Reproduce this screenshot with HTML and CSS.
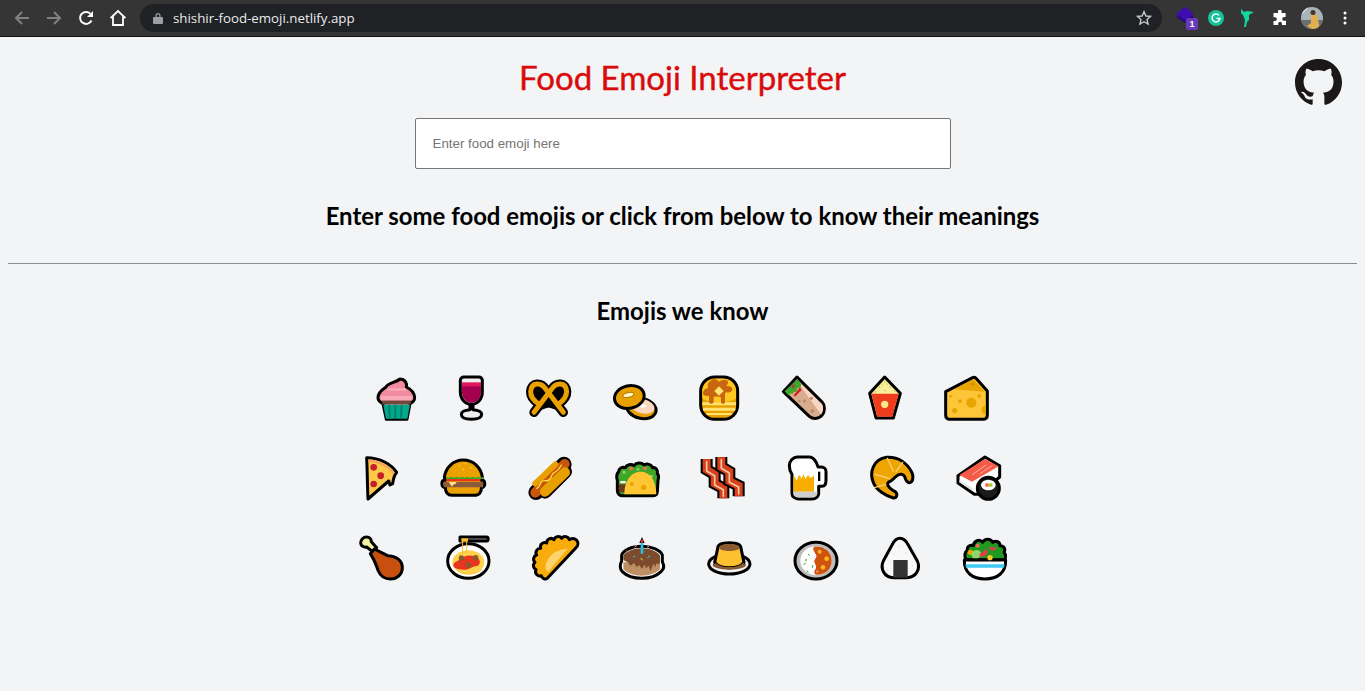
FILE: index.html
```html
<!DOCTYPE html>
<html lang="en">
<head>
<meta charset="utf-8">
<title>Food Emoji Interpreter</title>
<link rel="stylesheet" href="styles.css">
</head>
<body>
<header class="chrome">
  <div class="nav">
    <svg class="ico" viewBox="0 0 16 16" width="16" height="16"><path class="line dim" d="M15 8H2M8 2 2 8l6 6"/></svg>
    <svg class="ico" viewBox="0 0 16 16" width="16" height="16"><path class="line dim" d="M1 8h13M8 2l6 6-6 6"/></svg>
    <svg class="ico" viewBox="0 0 16 16" width="16" height="16"><path class="line lit" d="M13.5 10.5A6 6 0 1 1 12.3 3.6"/><path class="solid" d="M15 1v6H9z"/></svg>
    <svg class="ico home" viewBox="0 0 18 18" width="18" height="18"><path class="line lit thin" d="M1.500 9.200 9 2l7.500 7.200M4 7.500V16h10V7.500"/></svg>
  </div>
  <div class="omni">
    <svg class="lock" viewBox="0 0 10 12" width="10" height="12"><path class="grey" d="M1 5h8a1 1 0 0 1 1 1v5a1 1 0 0 1-1 1H1a1 1 0 0 1-1-1V6a1 1 0 0 1 1-1zM2.500 5V3.500a2.500 2.500 0 0 1 5 0V5H6.300V3.500a1.300 1.300 0 0 0-2.600 0V5z"/></svg>
    <span class="url">shishir-food-emoji.netlify.app</span>
    <svg class="star" viewBox="0 0 16 16" width="16" height="16"><path class="starline" d="M8 1.600 9.900 6l4.700.4-3.600 3.100 1.100 4.600L8 11.700l-4.100 2.400L5 9.500 1.400 6.400 6.100 6z"/></svg>
  </div>
  <div class="exts">
    <div class="ext-layer">
      <svg viewBox="0 0 20 18" width="20" height="18"><path fill="#2c0a80" d="M0 10 9 5l9 5-9 6z"/><path fill="#3f0ab0" d="M0 7 9 0l9 7-9 6z"/></svg>
      <span class="badge">1</span>
    </div>
    <svg viewBox="0 0 16 16" width="16" height="16"><circle cx="8" cy="8" r="8" fill="#15c39a"/><path class="gmark" d="M11 5.200A4 4 0 1 0 12 8.500H8.500"/></svg>
    <svg class="m3" viewBox="0 0 16 20" width="16" height="20"><path fill="#12d6a0" d="M2 1l3 3 3-1 7 1-5 3v5l-2 2-1 5-2 0 1-7-2-5L2 5z"/></svg>
    <svg class="m5" viewBox="0 0 16 16" width="16" height="16"><path fill="#fff" d="M6 1.500a1.800 1.800 0 0 1 3.600 0V3h4v4h-1.500a1.900 1.900 0 0 0 0 3.800H14V15h-4v-1.300a1.900 1.900 0 0 0-3.800 0V15H1.500v-4H3a1.900 1.900 0 0 0 0-3.800H1.500V3H6z"/></svg>
    <svg class="m1" viewBox="0 0 22 22" width="22" height="22"><clipPath id="av"><circle cx="11" cy="11" r="11"/></clipPath><g clip-path="url(#av)"><rect width="22" height="22" fill="#a9b4b8"/><rect y="13" width="22" height="9" fill="#6b6f70"/><path fill="#e0b050" d="M10 8h6l3 14h-8l-5-3 4-3z"/><circle cx="12" cy="5.500" r="2.500" fill="#4a3428"/><path fill="#e8eef0" d="M0 0h8L0 8z"/></g></svg>
    <svg class="m8" viewBox="0 0 4 14" width="4" height="14"><circle cx="2" cy="2" r="1.500" fill="#fff"/><circle cx="2" cy="7" r="1.500" fill="#fff"/><circle cx="2" cy="12" r="1.500" fill="#fff"/></svg>
  </div>
</header>

<main class="page">
  <a class="github" href="#" aria-label="GitHub">
    <svg viewBox="0 0 16 16" width="47" height="47"><path fill="#1b1817" d="M8 0C3.580 0 0 3.580 0 8c0 3.540 2.290 6.530 5.470 7.590.4.070.55-.17.55-.38 0-.19-.01-.82-.01-1.490-2.010.37-2.530-.49-2.690-.94-.09-.23-.48-.94-.82-1.130-.28-.15-.68-.52-.01-.53.63-.01 1.080.58 1.230.82.72 1.210 1.870.87 2.330.66.07-.52.28-.87.51-1.070-1.780-.2-3.640-.89-3.640-3.950 0-.87.31-1.590.82-2.150-.08-.2-.36-1.020.08-2.120 0 0 .67-.21 2.200.82.64-.18 1.320-.27 2-.27.68 0 1.360.09 2 .27 1.530-1.040 2.200-.82 2.200-.82.44 1.100.16 1.920.08 2.120.51.56.82 1.270.82 2.150 0 3.070-1.870 3.750-3.650 3.950.29.25.54.73.54 1.480 0 1.070-.01 1.930-.01 2.200 0 .21.15.46.55.38A8.013 8.013 0 0016 8c0-4.420-3.580-8-8-8z"/></svg>
  </a>
  <h1 class="title">Food Emoji Interpreter</h1>
  <input class="emoji-input" type="text" placeholder="Enter food emoji here">
  <h2 class="hint">Enter some food emojis or click from below to know their meanings</h2>
  <hr class="rule">
  <h3 class="known">Emojis we know</h3>

  <section class="emoji-list">
    <div class="emoji-row">
      <!-- cupcake -->
      <svg class="emoji" width="41" height="46" viewBox="81 30 123 138"><path class="ol" fill="#f28ba0" d="M150 42c14 0 22 12 19 24 16 8 25 20 25 32 0 9-7 14-14 18l-9 47h-62l-10-47c-8-4-15-9-15-18 0-13 12-24 24-32 8-14 28-12 42-24z"/><path fill="#f9a9b6" d="M92 93h95v12H92zM112 70h56v7h-56z"/><path fill="#6b4a3c" d="M97 107h85v11H97z"/><path fill="#00a88c" d="M100 119h80l-8 42h-64z"/><path fill="#00806c" d="M114 119h6l3 42h-6zM133 119h6v42h-6zM152 119h6l-2 42h-6z"/></svg>
      <!-- wine -->
      <svg class="emoji" width="26" height="46" viewBox="327 30 78 138"><path class="ol" fill="#efeff1" d="M342 36h44c7 0 11 5 11 10v34c0 22-14 38-33 38s-33-16-33-38V46c0-5 4-10 11-10z"/><path class="ol" fill="#efeff1" d="M360 118h9v16c14 1 26 5 26 14s-12 15-31 15-30-6-30-15 12-13 26-14z"/><path fill="#a4004f" d="M336 58h57v22c0 18-12 33-29 33s-28-15-28-33z"/><path fill="#e0175f" d="M336 52h57v12h-57z"/></svg>
      <!-- pretzel -->
      <svg class="emoji" width="46" height="46" viewBox="528 30 138 138"><path fill="#000" d="m596 85-36 42h72z"/><path class="p1" d="M552 142 605 72c13-20 43-22 45 8 1 18-10 28-26 38"/><path class="p1" d="M640 142 587 72c-13-20-43-22-45 8-1 18 10 28 26 38"/><path class="p2" d="M640 142 587 72c-13-20-43-22-45 8-1 18 10 28 26 38"/><path class="p2" d="M552 142 605 72c13-20 43-22 45 8-1 18-10 28-26 38"/></svg>
      <!-- bagel -->
      <svg class="emoji" width="45" height="46" viewBox="789 30 135 138"><ellipse class="ol" cx="874" cy="130" rx="45" ry="30" fill="#e89f00" transform="rotate(14 874 130)"/><ellipse cx="876" cy="123" rx="38" ry="22" fill="#fbd7bf" transform="rotate(14 876 123)"/><ellipse cx="873" cy="122" rx="16" ry="5" fill="#fff" transform="rotate(6 873 122)"/><ellipse class="ol" cx="838" cy="96" rx="45" ry="34" fill="#e89f00" transform="rotate(-12 838 96)"/><ellipse cx="835" cy="90" rx="17" ry="7" fill="#fff3c8" stroke="#b07a00" stroke-width="3" transform="rotate(-12 835 90)"/></svg>
      <!-- pancakes -->
      <svg class="emoji" width="41" height="46" viewBox="57 30 123 138"><rect class="ol" x="62" y="36" width="111" height="127" rx="42" fill="#e6a000"/><path fill="#ffe270" d="M67 112h101v9H67zM69 128h97v9H69zM80 144h75v6H80z"/><path fill="#ffc81e" d="M67 100V78c0-24 20-37 42-37h17c22 0 42 13 42 37v22c-14 10-34 12-50 12s-38-2-51-12z"/><path fill="#c8650f" d="M103 42c4 0 8 2 14 8 6-4 16-8 24-4 6 6 2 14-4 18 8-2 18 0 20 8 0 8-8 12-18 10-4 0-4 6-4 12v18c-2 6-10 6-12 0V98c-6-4-16-4-22-2v14c-2 8-12 8-14 0V92c-8 2-18 0-18-8s8-14 16-14c-4-8-4-22 18-28z"/><path fill="#ffe270" d="m117 64 14 14-14 14-14-14z"/></svg>
      <!-- burrito -->
      <svg class="emoji" width="46" height="46" viewBox="303 30 138 138"><path class="ol" fill="#d8ac8f" d="m351 36 76 76c8 8 9 26-1 39-11 12-28 12-38 3L310 80z"/><path fill="#f7d6c3" d="m352 47 73 69c6 8 6 22-2 32L370 76z"/><path fill="#3da82a" d="m352 42-38 37 12 13 5-8 6 4 5-8 7 1 3-12 9-1 3-9z"/><path fill="#8a5a3c" d="m337 57 11 3-7 11-8-4z"/><path fill="#d92020" d="m360 67 5 8-20 20-4-4z"/><circle cx="394" cy="100" r="5" fill="#bd8c6c"/><circle cx="373" cy="108" r="5" fill="#bd8c6c"/><circle cx="397" cy="138" r="6" fill="#bd8c6c"/><circle cx="358" cy="108" r="4" fill="#bd8c6c"/></svg>
      <!-- popcorn -->
      <svg class="emoji" width="35" height="46" viewBox="564 30 105 138"><path class="ol" fill="#f9ee9a" d="m614 36 47 49-21 74h-52l-19-74z"/><path fill="#ee3c1c" d="M574 86h82l-19 69h-45z"/><circle cx="614" cy="118" r="11" fill="#fbe98a"/><path fill="#e0cf5a" d="M596 64h5v5h-5zM612 48h5v5h-5zM628 64h5v5h-5zM612 74h5v5h-5zM584 78h5v5h-5zM642 76h5v5h-5zM604 56h4v4h-4zM620 56h4v4h-4z"/></svg>
      <!-- cheese -->
      <svg class="emoji" width="45" height="46" viewBox="792 30 135 138"><path class="ol" fill="#fdc638" d="M797 80 878 38c4-2 7-1 10 2l34 38v72c0 8-5 13-13 13H810c-8 0-13-5-13-13z"/><path fill="#e8a500" d="m825 73 55-30 33 35v2z"/><circle cx="874" cy="113" r="15" fill="#e8a500"/><circle cx="840" cy="109" r="6" fill="#e8a500"/><circle cx="824" cy="137" r="8" fill="#e8a500"/><circle cx="812" cy="94" r="4" fill="#e8a500"/><circle cx="898" cy="93" r="6" fill="#e8a500"/><path fill="#e8a500" d="M917 122a12 12 0 0 0 0 24z"/><circle cx="878" cy="58" r="6" fill="#d49400"/></svg>
    </div>

    <div class="emoji-row">
      <!-- pizza -->
      <svg class="emoji" width="35" height="46" viewBox="45 30 105 138"><path class="ol" fill="#fdc94a" d="M50 38c40 0 74 20 90 44-8 8-10 18-12 34l-8 4-4-12-62 54c-2-40-2-84-4-124z"/><path fill="#f5a45e" d="M55 43c34 2 62 18 80 40l-5 5C112 66 84 52 56 52z"/><circle cx="71" cy="67" r="10" fill="#c81e28"/><circle cx="92" cy="92" r="10" fill="#c81e28"/><circle cx="71" cy="117" r="10" fill="#c81e28"/></svg>
      <!-- burger -->
      <svg class="emoji" width="45" height="46" viewBox="273 30 135 138"><path class="ol" fill="#eba200" d="M340 45c32 0 52 24 57 50 0 4-1 8-3 11h6c6 3 6 18-1 21h-5c1 14-6 24-20 24h-68c-14 0-20-10-20-24h-5c-7-3-7-18-1-21h6c-2-3-3-7-3-11 5-26 25-50 57-50z"/><path fill="#e8351e" d="M289 102h102v7H289z"/><path fill="#3fa628" d="m288 95 8 3 8-3 8 3 8-3 8 3 8-3 8 3 8-3 8 3 8-3 8 3 8-3 8 3 8-3v7H288z"/><path fill="#8c5a3c" d="M281 111h118v16H281z"/><path fill="#ffe48a" d="M296 111h24l-4 6-6 2-4 6-4-6z"/><path fill="#ffcf4a" d="M326 60h4v4h-4zM344 54h4v4h-4zM360 66h4v4h-4zM338 72h4v4h-4z"/></svg>
      <!-- hot dog -->
      <svg class="emoji" width="47" height="46" viewBox="531 30 141 138"><path class="hd1" d="m558 142 84-84"/><path class="hd1b" d="m585 140 60-60"/><path class="hd2" d="m556 143 88-86"/><path class="hd3" d="m556 116 60-58"/><path class="hd4" d="m585 140 60-58"/><path class="hd5" d="M560 130c12-4 8-18 18-22s14 4 22-6 2-14 14-20 12-8 20-22"/></svg>
      <!-- taco -->
      <svg class="emoji" width="45" height="46" viewBox="795 30 135 138"><path class="ol" fill="#3fa628" d="M802 136v-30c-4-8-2-20 4-26 0-10 10-16 20-12 4-10 18-12 26-6 8-10 22-10 30-2 10-6 22-2 26 8 10-2 16 8 14 18 6 6 4 14 2 20l-2 34c0 6-4 12-12 12H816c-8 0-14-6-14-16z"/><path fill="#fff" d="M811 108h16v7h-16z"/><path fill="#6b3a20" d="M807 118h20v24h-20z"/><path fill="#f0705a" d="M838 66h10v10h-10zM880 66h10v8h-10z"/><path fill="#8fd66e" d="M818 78h8v8h-8zM860 70h8v6h-8zM900 90h8v8h-8z"/><path fill="#fdc632" d="M823 148c0-40 20-68 48-68s47 24 48 68z"/><circle cx="845" cy="117" r="6" fill="#e8a400"/><circle cx="881" cy="127" r="8" fill="#e8a400"/></svg>
      <!-- bacon -->
      <svg class="emoji" width="46" height="46" viewBox="63 30 138 138"><path class="b1" d="M80 42v32l24 14v28l26 14v30"/><path class="b2" d="M80 42v32l24 14v28l26 14v30"/><path class="b3" d="M80 50v28l24 14v28l26 14v20"/><path class="b1" d="M124 36v30l24 14v28l28 14v32"/><path class="b2" d="M124 36v30l24 14v28l28 14v32"/><path class="b3" d="M124 44v26l24 14v28l28 14v20"/></svg>
      <!-- beer -->
      <svg class="emoji" width="41" height="46" viewBox="324 30 123 138"><path class="ol" fill="#fff" d="M352 36c-12 0-24 12-24 26 0 12 4 20 8 26v58c0 10 12 16 20 16h40c12 0 20-8 20-16v-22h10c10 0 12-8 12-18V80c0-8-6-14-14-14h-10c-4-16-14-30-26-30z"/><path fill="#f9ad00" d="M340 92c6 2 6 6 8 12h4c2-8 2-12 8-14l4 12 6-14 6 14 8-12 6 8 8-2 4-6v50h-62z"/><path fill="#cfcfcf" d="M340 140h72v6c-2 6-8 11-14 11h-44c-8 0-14-5-14-11z"/><path fill="#000" d="M414 80h7v28h-7z"/></svg>
      <!-- croissant -->
      <svg class="emoji" width="45" height="46" viewBox="570 30 135 138"><path class="ol" fill="#eea500" d="M620 37c36-2 62 18 76 46 6 14 2 30-8 30s-10-8-14-18c-4-8-14-10-24-2-10 6-12 16-24 18-6 6-4 14 14 26 16 6 12 22 0 22-22-6-50-22-60-46-12-30-2-70 40-76z"/><path class="cr" d="m622 40 18 38M668 52l-20 28M585 88l42 12M583 128l34-10"/></svg>
      <!-- sushi -->
      <svg class="emoji" width="45" height="46" viewBox="828 30 135 138"><path class="ol" fill="#fff" d="M834 92 915 36l44 26v34l-60 52h-16l-49-34z"/><path fill="#e2e2e2" d="m838 112 40 26v-8l-40-24z"/><path fill="#f55b46" d="m838 90 77-48 41 22-80 46z"/><path class="sal" d="m878 88 40-28M900 86l36-24"/><circle class="ol" cx="925" cy="130" r="33" fill="#1b1b1b"/><ellipse cx="925" cy="120" rx="22" ry="16" fill="#fff"/><circle cx="932" cy="120" r="6" fill="#a7d129"/><circle cx="921" cy="120" r="6" fill="#f0705a"/></svg>
    </div>

    <div class="emoji-row">
      <!-- chicken -->
      <svg class="emoji" width="46" height="46" viewBox="27 30 138 138"><path class="ol" fill="#f5f3a0" d="M50 36c8 0 14 6 14 14l16 18-12 12-18-14c-8 2-18-4-18-12 0-10 8-18 18-18z"/><path class="ol" fill="#c8500f" d="m73 72 40 20c24 0 44 14 44 36 0 20-16 34-36 34-18 0-30-10-36-24-6-14-6-24-24-52z"/></svg>
      <!-- noodles -->
      <svg class="emoji" width="46" height="46" viewBox="288 30 138 138"><path class="ol" fill="#8f8f8f" d="M330 36h80c6 0 6 12 0 12h-80z"/><ellipse class="ol" cx="355" cy="108" rx="62" ry="52" fill="#fff"/><ellipse cx="355" cy="112" rx="48" ry="36" fill="#fcd34d"/><path fill="#e8351e" d="M310 122c0-12 14-12 20-20 12-14 44-14 54-2 10 8 6 24-8 24-10 0-18 12-32 10-12 0-32-2-34-12z"/><circle cx="334" cy="99" r="8" fill="#8a5a30"/><circle cx="377" cy="98" r="8" fill="#8a5a30"/><circle cx="355" cy="120" r="8" fill="#8a5a30"/><path class="nd" d="M338 45v40M350 45v40M320 134c16 18 56 18 74 0"/><path fill="#fcbf2a" d="M334 40h20v10h-20z"/></svg>
      <!-- empanada -->
      <svg class="emoji" width="45" height="46" viewBox="549 30 135 138"><path class="ol" fill="#f8ad0c" d="M678 68 592 160A12 12 0 0 1 574 152 13 13 0 0 1 558 134 13 13 0 0 1 555 112 13 13 0 0 1 560 90 13 13 0 0 1 572 70 13 13 0 0 1 590 54 13 13 0 0 1 612 44 13 13 0 0 1 635 40 13 13 0 0 1 658 44 14 14 0 0 1 678 68z"/><path fill="#fdd36e" d="M652 72c-32 0-64 20-66 58l8 12z"/></svg>
      <!-- cake -->
      <svg class="emoji" width="47" height="46" viewBox="807 30 141 138"><path class="ol" fill="#fff" d="M815 108V90c6-14 28-26 60-26s56 12 62 26v20c6 12 6 22-4 30-14 14-36 20-58 20-24 0-44-6-58-20-8-8-8-22-2-32z"/><path fill="#be8f62" d="M820 112h110v20c-10 12-30 20-55 20s-45-8-55-20z"/><path fill="#7c4a2c" d="M820 92c8-12 28-22 55-22s47 10 55 22v20c-4 8-8 6-10 2l-4 12-6-10-8 22-6-16-8 8-4-12-8 14-8-12-8 6-8-12-10 8-10-12c-6 0-12-4-12-8z"/><path fill="#000" d="m868 54 8-18 8 18z"/><path fill="#1fc3e8" d="M872 54h8v32h-8z"/><path fill="#f01e1e" d="M873 44h6v10h-6z"/><path class="spr1" d="m854 66 6-4M830 78l5 3M892 66l5-3"/><path class="spr2" d="m850 96 5-3M893 98l6-5"/><path class="spr3" d="m873 100 4 5"/></svg>
      <!-- flan -->
      <svg class="emoji" width="46" height="46" viewBox="81 30 138 138"><ellipse class="ol" cx="148" cy="117" rx="62" ry="30" fill="#f2f2f2"/><ellipse cx="148" cy="120" rx="50" ry="14" fill="#8a5a30"/><path class="ol" fill="#fdc130" d="M113 70c0-10 12-17 35-17s35 7 35 17l9 42c-10 14-30 16-44 16s-34-2-44-16z"/><path fill="#8a5a30" d="M118 70c0-8 10-13 30-13s30 5 30 13c-4 6-16 8-30 8s-26-2-30-8z"/><path fill="#8a5a30" d="M106 113c10 10 26 13 42 13s32-3 42-13l4 7c-10 10-28 13-46 13s-36-3-46-13z"/></svg>
      <!-- curry -->
      <svg class="emoji" width="46" height="46" viewBox="342 30 138 138"><ellipse class="ol" cx="408" cy="107" rx="63" ry="55" fill="#bdbdbd"/><ellipse cx="408" cy="107" rx="47" ry="43" fill="#fff"/><path fill="#d0520f" d="M402 65c30-4 53 16 53 42s-20 42-44 42c-10 0-10-10-4-18 4-6-2-14-4-20-2-6 8-12 6-20-2-8-14-16-7-26z"/><circle cx="419" cy="80" r="6" fill="#f9b820"/><circle cx="440" cy="101" r="7" fill="#f9b820"/><circle cx="429" cy="127" r="7" fill="#f9b820"/><circle cx="412" cy="140" r="4" fill="#f08a40"/><path class="pea" d="M378 103v5M398 122v5M385 88l3 3M372 118l4-2M382 138l2 3"/></svg>
      <!-- onigiri -->
      <svg class="emoji" width="41" height="46" viewBox="603 30 123 138"><path class="ol" fill="#f8f8f8" d="M660 40c12 0 20 10 26 22l26 46c10 22-2 50-32 50h-40c-28 0-40-28-30-50l26-48c6-12 14-20 24-20z"/><path fill="#333" d="M640 105h43v53h-43z"/><path fill="#dcdcdc" d="M655 62h4v4h-4zM675 82h4v4h-4zM628 108h4v4h-4zM695 120h4v4h-4zM640 85h4v4h-4zM620 132h4v4h-4z"/></svg>
      <!-- salad -->
      <svg class="emoji" width="44" height="46" viewBox="849 30 132 138"><path class="ol" fill="#1f9a1f" d="M858 104c-6-10-4-24 4-28-2-12 10-18 18-14 2-14 18-22 28-10 6-12 24-12 30 0 10-6 22-2 22 10 12 0 18 10 12 20 6 6 6 14 2 22z"/><path class="ol" fill="#fff" d="M853 105h124c1 38-25 57-62 57s-63-19-62-57z"/><path fill="#3fc8f2" d="M856 118h118l-2 10H858z"/><circle cx="871" cy="82" r="8" fill="#f4a400"/><circle cx="893" cy="62" r="6" fill="#f0705a"/><path fill="#8fd66e" d="M880 78c8-6 20-4 24 6 2 8-4 14-12 16h-12c-8-6-6-16 0-22z"/><path fill="#d9414a" d="m898 88 22-16 4 10c-4 8-12 16-24 14z"/><path fill="#d9414a" d="m928 65 22 3c-2 8-16 12-22 4z"/><circle cx="930" cy="98" r="8" fill="#f9c820"/></svg>
    </div>
  </section>
</main>
</body>
</html>
```
FILE: styles.css
```css
* { box-sizing: border-box; }
html, body { margin: 0; height: 100%; }
body { background: #f3f4f6; color: #000; font-family: "Lato", sans-serif; overflow: hidden; }

.chrome { display: flex; align-items: center; height: 37px; background: #353535; border-bottom: 1px solid #111; }
.nav { display: flex; align-items: center; gap: 16px; padding-left: 14px; width: 140px; }
.ico { flex: none; }
.home { margin-left: -1px; }
.line { fill: none; stroke-width: 2; }
.dim { stroke: #7f8081; }
.lit { stroke: #fff; }
.thin { stroke-width: 1.800; }
.solid { fill: #fff; }
.omni { display: flex; align-items: center; width: 1022px; height: 28px; border-radius: 14px; background: #202124; padding: 0 10px 0 13px; }
.lock { flex: none; }
.grey { fill: #9aa0a6; fill-rule: evenodd; }
.url { margin-left: 10px; flex: 1; color: #e8eaed; font: 13.300px "Open Sans", sans-serif; }
.star { flex: none; }
.starline { fill: none; stroke: #c4c7c5; stroke-width: 1.400; }
.exts { display: flex; align-items: center; gap: 12px; padding-left: 14px; }
.m3 { margin-left: 3px; }
.m5 { margin-left: 5px; }
.m1 { margin-left: 1px; }
.m8 { margin-left: 8px; }
.ext-layer { position: relative; width: 20px; height: 22px; }
.badge { position: absolute; left: 10px; top: 11px; width: 12px; height: 12px; border-radius: 2px; background: #673ab7; color: #fff; font: bold 9px/12px "Liberation Sans", sans-serif; text-align: center; }
.gmark { fill: none; stroke: #fff; stroke-width: 1.500; }

.page { position: relative; padding: 0 8px; }
.github { position: absolute; top: 22px; right: 23px; display: block; line-height: 0; }
.title { margin: 0; padding-top: 20px; font-size: 33px; line-height: 40px; font-weight: 400; color: #d90b0b; text-align: center; -webkit-text-stroke: 0.4px #d90b0b; }
.emoji-input { display: block; width: 536px; height: 51px; margin: 21px auto 0; padding: 0 17px; background: #fff; border: 1px solid #767676; border-radius: 2px; font: 13.333px "Liberation Sans", sans-serif; }
.emoji-input::placeholder { color: #757575; }
.hint { margin: 32px 0 0; font-size: 23.930px; line-height: 30px; font-weight: 700; text-align: center; }
.rule { margin: 32px 0 0; border: 0; border-top: 1px solid #8c8c8c; }
.known { margin: 32px 0 0; font-size: 23.930px; line-height: 30px; font-weight: 700; text-align: center; }

.emoji-list { display: flex; flex-direction: column; gap: 34px; margin-top: 49px; padding-left: 1px; }
.emoji-row { display: flex; justify-content: center; gap: 41px; }
.emoji { flex: none; display: block; overflow: visible; }

.ol { stroke: #000; stroke-width: 9; stroke-linejoin: round; stroke-linecap: round; }
.p1, .p2, .hd1, .hd1b, .hd2, .hd3, .hd4, .hd5, .b1, .b2, .b3, .cr, .sal, .nd, .pea, .spr1, .spr2, .spr3 { fill: none; stroke-linecap: round; stroke-linejoin: round; }
.p1 { fill: #000; stroke: #000; stroke-width: 28; }
.p2 { stroke: #eaa000; stroke-width: 15; }
.hd1 { stroke: #000; stroke-width: 46; }
.hd1b { stroke: #000; stroke-width: 42; }
.hd2 { stroke: #c8560f; stroke-width: 30; }
.hd3 { stroke: #e8a000; stroke-width: 18; }
.hd4 { stroke: #e8a000; stroke-width: 30; }
.hd5 { stroke: #ffe040; stroke-width: 4; }
.b1 { stroke: #000; stroke-width: 36; stroke-linecap: butt; stroke-linejoin: miter; }
.b2 { stroke: #d6401a; stroke-width: 24; stroke-linecap: butt; stroke-linejoin: miter; }
.b3 { stroke: #fbc8a8; stroke-width: 5; }
.cr { stroke: #fbd27a; stroke-width: 4; }
.sal { stroke: #ffb0a0; stroke-width: 3; }
.nd { stroke: #fcbf2a; stroke-width: 3; }
.pea { stroke: #1f9a1f; stroke-width: 3; }
.spr1 { stroke: #f2a07a; stroke-width: 3; }
.spr2 { stroke: #3fc8e8; stroke-width: 3; }
.spr3 { stroke: #ffe040; stroke-width: 3; }
```
